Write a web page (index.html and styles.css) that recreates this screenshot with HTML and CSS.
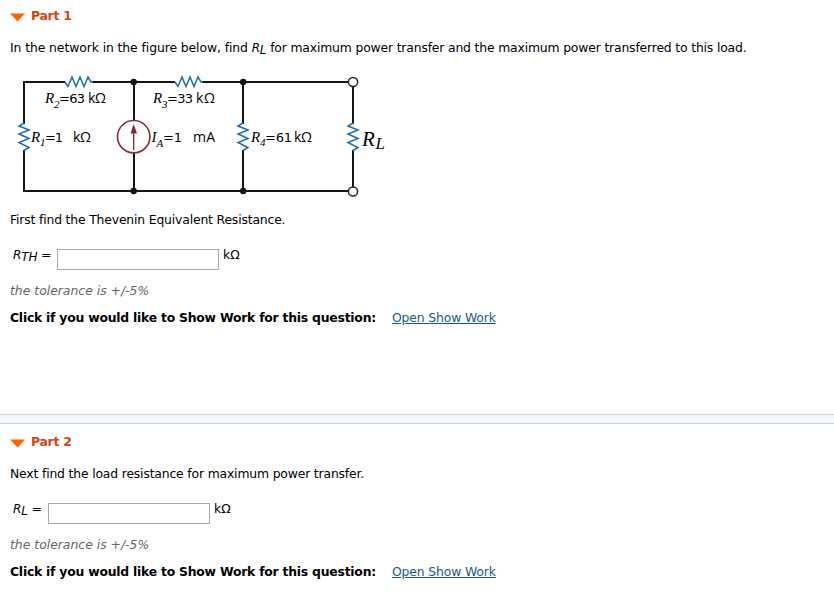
FILE: index.html
```html
<!DOCTYPE html>
<html lang="en">
<head>
<meta charset="utf-8">
<title>Thevenin Equivalent</title>
<link rel="stylesheet" href="styles.css">
</head>
<body>
<section class="part">
  <h2 class="part-title"><svg class="caret" width="15" height="9" viewBox="0 0 15 9"><path d="M0 .5H15L7.5 8.5Z"/></svg><span>Part 1</span></h2>
  <p class="prompt"><span class="t-find">In the network in the figure below, find </span><span class="var">R<span class="sub">L</span></span><span class="t-max"> for maximum power transfer and the maximum power transferred to this load.</span></p>
  <svg class="circuit" width="500" height="130" viewBox="0 70 500 130">
    <g class="wire">
      <path d="M65 82H24V124M24 150V191H353M92 82H175M202 82H353M134 82V120M134 153V191M243 82V124M243 150V191M353 82V124M353 150V191"/>
    </g>
    <g class="resistor">
      <path d="M65 82L68 86.500L72 77L76 86.500L80 77L84 86.500L88 77L91 82H93"/>
      <path d="M175 82L178 86.500L182 77L186 86.500L190 77L194 86.500L198 77L201 82H203"/>
      <path id="zig" d="M24 123L19 126L29 130L19 134L29 138.500L19 142.500L29 147.500L24 150.500"/>
      <use href="#zig" x="219"/>
      <use href="#zig" x="329"/>
    </g>
    <g class="node"><circle cx="133.700" cy="82" r="3.200"/><circle cx="243.200" cy="82" r="3.200"/><circle cx="133.700" cy="191" r="3.200"/><circle cx="243.200" cy="191" r="3.200"/></g>
    <g class="terminal"><circle cx="353" cy="82" r="4.600"/><circle cx="353" cy="191.500" r="4.600"/></g>
    <circle class="source" cx="133.700" cy="136.700" r="16.200"/>
    <path class="source-line" d="M133.700 150V131"/><path class="source-tip" d="M133.700 124L130.500 133.500H137Z"/>
    <g class="serif">
      <text x="45" y="103">R</text><text class="index" x="54" y="107.500">2</text>
      <text x="153" y="103">R</text><text class="index" x="162" y="107.500">3</text>
      <text x="31" y="141.500">R</text><text class="index" x="40" y="146">1</text>
      <text x="151.500" y="141.500">I</text><text class="index" x="156.500" y="147">A</text>
      <text x="251" y="141.500">R</text><text class="index" x="260" y="146">4</text>
      <text class="load" x="362" y="146">R</text><text class="load-index" x="375.500" y="148.500">L</text>
    </g>
    <g class="value">
      <text x="59" y="103" textLength="26">=63</text><text class="unit" x="88" y="103" textLength="18">kΩ</text>
      <text x="167" y="103" textLength="26">=33</text><text class="unit" x="196" y="103" textLength="19">kΩ</text>
      <text x="45" y="142" textLength="18">=1</text><text class="unit" x="73" y="142" textLength="18">kΩ</text>
      <text x="163" y="142" textLength="19">=1</text><text class="unit" x="193" y="142" textLength="22">mA</text>
      <text x="265" y="142" textLength="27">=61</text><text class="unit" x="294" y="142" textLength="18">kΩ</text>
    </g>
  </svg>
  <p class="prompt"><span class="t-first">First find the Thevenin Equivalent Resistance.</span></p>
  <div class="answer">
    <label class="label wide" for="rth"><span class="var">R<span class="sub">TH</span></span> =</label>
    <input class="field" id="rth" type="text"><span class="unit-label">kΩ</span>
  </div>
  <p class="tolerance">the tolerance is +/-5%</p>
  <p class="work"><b class="work-text">Click if you would like to Show Work for this question:</b><a class="work-link" href="#">Open Show Work</a></p>
</section>
<section class="part second">
  <h2 class="part-title"><svg class="caret" width="15" height="9" viewBox="0 0 15 9"><path d="M0 .5H15L7.5 8.5Z"/></svg><span>Part 2</span></h2>
  <p class="prompt"><span class="t-next">Next find the load resistance for maximum power transfer.</span></p>
  <div class="answer">
    <label class="label" for="rl"><span class="var">R<span class="sub">L</span></span> =</label>
    <input class="field" id="rl" type="text"><span class="unit-label">kΩ</span>
  </div>
  <p class="tolerance">the tolerance is +/-5%</p>
  <p class="work"><b class="work-text">Click if you would like to Show Work for this question:</b><a class="work-link" href="#">Open Show Work</a></p>
</section>
</body>
</html>
```
FILE: styles.css
```css
* { box-sizing: border-box; }
body {
  margin: 0;
  background: #fff;
  color: #000;
  font: 12.4px/20px "DejaVu Sans", Verdana, sans-serif;
  overflow: hidden;
}
p, h2 { margin: 0; white-space: pre; }
.part { height: 414px; padding: 6px 10px 0; }
.second { height: auto; border-top: 1px solid #cbd1de; padding-top: 0; }
.second::before {
  content: "";
  display: block;
  height: 8px;
  margin: 0 -10px 8px;
  background: #f4f8fc;
  border-bottom: 1px solid #cbd1de;
}
.part-title {
  display: flex;
  align-items: center;
  gap: 6px;
  height: 20px;
  margin-bottom: 12px;
  color: #d3430f;
  font-size: 12.4px;
  letter-spacing: -0.25px;
}
.caret { fill: #ff6200; margin-top: 2px; }
.prompt { height: 20px; display: flex; letter-spacing: -0.17px; }
.t-find { letter-spacing: -0.09px; }
.var { font-style: italic; font-size: 12px; }
.sub { position: relative; top: 2px; }
.circuit { display: block; margin: 12px 0 10px -10px; }
.answer { display: flex; height: 31px; margin-top: 15px; padding-left: 3px; }
.label { width: 35px; white-space: nowrap; letter-spacing: -0.15px; }
.label.wide { width: 44px; }
.field {
  width: 162px;
  height: 21px;
  margin: 4px 4px 0 0;
  border: 1px solid #a9a9a9;
  background: #fff;
  padding: 1px 3px;
}
.tolerance { margin: 5px 0 7px; color: #666; font-style: italic; }
.work { display: flex; gap: 16px; }
.work-text { letter-spacing: -0.23px; }
.work-link { color: #1c5a85; text-decoration: underline; letter-spacing: -0.14px; }
.wire { fill: none; stroke: #151515; stroke-width: 2; }
.resistor { fill: none; stroke: #1c6fae; stroke-width: 1.5; }
.node { fill: #151515; }
.terminal { fill: #fff; stroke: #222; stroke-width: 1.5; }
.source { fill: #fff; stroke: #8b2f3e; stroke-width: 1.7; }
.source-line { stroke: #8b2435; stroke-width: 1.3; }
.source-tip { fill: #8b2435; }
.serif { font: italic 15px "Liberation Serif", serif; }
.index { font-size: 11px; }
.load { font-size: 21px; }
.load-index { font-size: 17px; }
.value { font: 13px "DejaVu Sans", sans-serif; }
.unit { font: 14px "Open Sans", sans-serif; }
```
